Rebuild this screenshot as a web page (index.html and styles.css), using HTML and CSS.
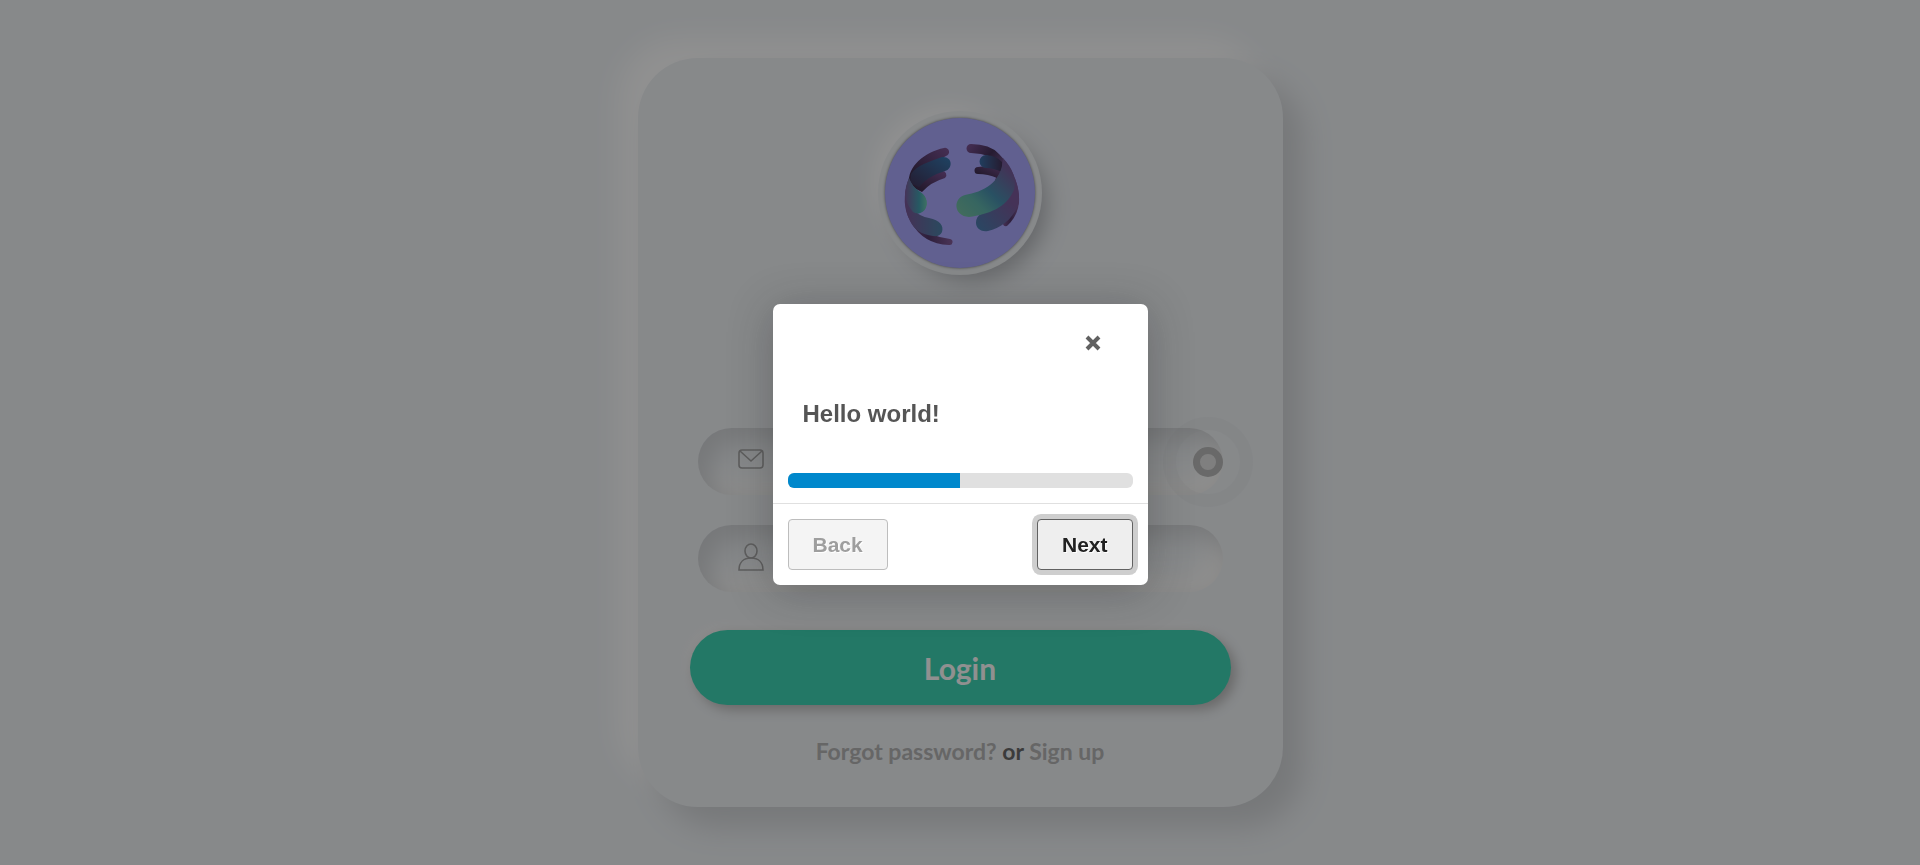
FILE: index.html
```
<!DOCTYPE html>
<html lang="en">
<head>
    <meta charset="UTF-8">
    <meta name="viewport" content="width=device-width, initial-scale=1.0">
    <title>Login</title>
    <link rel="stylesheet" href="styles.css">
</head>
<body>
    <main class="login-card">
        <div class="logo">
            <svg viewBox="0 0 150 150" aria-hidden="true">
                <defs>
                    <linearGradient id="plum" x1="0" y1="0" x2="1" y2="0">
                        <stop offset="0" stop-color="#6b4088"/>
                        <stop offset=".5" stop-color="#3a1c54"/>
                        <stop offset="1" stop-color="#74478c"/>
                    </linearGradient>
                    <linearGradient id="plum-dark" x1="1" y1="0" x2="0" y2="1">
                        <stop offset="0" stop-color="#6c3c88"/>
                        <stop offset=".8" stop-color="#241238"/>
                    </linearGradient>
                    <linearGradient id="night" x1="1" y1="0" x2="0" y2="1">
                        <stop offset="0" stop-color="#1c64a4"/>
                        <stop offset="1" stop-color="#261640"/>
                    </linearGradient>
                    <linearGradient id="night-right" x1="0" y1="0" x2="1" y2="0">
                        <stop offset="0" stop-color="#205a9a"/>
                        <stop offset="1" stop-color="#281640"/>
                    </linearGradient>
                    <linearGradient id="arm-right" x1="0" y1="0" x2="1" y2="1">
                        <stop offset="0" stop-color="#6c3c88"/>
                        <stop offset=".3" stop-color="#2a1440"/>
                        <stop offset=".55" stop-color="#66408a"/>
                        <stop offset="1" stop-color="#74428c"/>
                    </linearGradient>
                    <linearGradient id="aqua-left" x1="0" y1="0" x2="1" y2="0">
                        <stop offset="0" stop-color="#6a4590"/>
                        <stop offset=".65" stop-color="#2a92a5"/>
                        <stop offset="1" stop-color="#5bc0a4"/>
                    </linearGradient>
                    <linearGradient id="aqua-right" x1="0" y1="1" x2="1" y2="0">
                        <stop offset="0" stop-color="#67b995"/>
                        <stop offset=".3" stop-color="#4ba9a0"/>
                        <stop offset=".5" stop-color="#3080a4"/>
                        <stop offset=".85" stop-color="#63458c"/>
                    </linearGradient>
                    <linearGradient id="steel-left" x1="0" y1="0" x2="1" y2="0">
                        <stop offset="0" stop-color="#68408a"/>
                        <stop offset="1" stop-color="#33719c"/>
                    </linearGradient>
                    <linearGradient id="steel-right" x1="0" y1="1" x2="1" y2="0">
                        <stop offset="0" stop-color="#2f6fa5"/>
                        <stop offset=".7" stop-color="#68428c"/>
                    </linearGradient>
                </defs>
                <!-- left hand -->
                <path fill="url(#plum-dark)" d="M24 66C22 48 40 34 59 30A4 4 0 0 1 61 38C54 42 46 44 40 52Z"/>
                <path fill="url(#plum-dark)" d="M27 61Q40 57 57 53A4 4 0 0 1 60 60Q46 64 37 74L25 68Z"/>
                <path fill="url(#night)" d="M26 56C32 47 44 44 57 39C68 38 68 51 60 53Q43 58 34 69L25 65Z"/>
                <path fill="url(#plum)" d="M24 61C18 76 18 92 26 104Q38 126 64 127A3 3 0 0 0 65 121Q46 119 36 108L24 90Z"/>
                <path fill="url(#aqua-left)" d="M24 60Q27 69 35 74C44 79 44 92 35 95Q29 96 28 100C18 88 19 72 24 60Z"/>
                <path fill="url(#steel-left)" d="M20 76Q26 97 44 100C55 102 59 108 57 114Q55 119 48 118Q31 116 25 103Q20 94 20 76Z"/>
                <path fill="url(#aqua-left)" d="M24 60Q27 69 35 74C44 79 44 92 35 95Q31 96 28 94Q22 87 20 78Q20 69 24 60Z"/>
                <!-- right hand -->
                <path fill="url(#plum)" d="M134 84Q133 98 122 108Q117 109 118 103L126 86Z"/>
                <path fill="url(#arm-right)" d="M86 26Q105 26 114 36C128 50 135 68 134 84Q132 93 126 94L110 62L117 46Q107 36 86 35A4 4 0 0 1 86 26Z"/>
                <path fill="url(#plum-dark)" d="M93 49Q103 48 113 46L117 50L112 60Q103 56 93 56A3 3 0 0 1 93 49Z"/>
                <path fill="url(#night-right)" d="M101 37Q112 38 117 44V54Q108 50 101 50A6 6 0 0 1 101 37Z"/>
                <path fill="url(#steel-right)" d="M96 96Q124 88 130 61Q136 77 133 88C126 103 115 110 103 113C89 115 88 100 96 96Z"/>
                <path fill="url(#aqua-right)" d="M80 77C98 74 117 65 118 40Q133 56 129 72C121 90 104 96 84 99C68 98 68 80 80 77Z"/>
            </svg>
        </div>
        <form class="login-form">
            <div class="fields">
                <label class="field">
                    <svg viewBox="0 0 26 28" aria-hidden="true">
                        <rect x="1" y="4" width="24" height="18" rx="3"/>
                        <path d="M2 5L13 15L24 5"/>
                    </svg>
                    <input type="text" aria-label="Username">
                </label>
                <label class="field">
                    <svg viewBox="0 0 26 28" aria-hidden="true">
                        <ellipse cx="13" cy="8" rx="6" ry="7"/>
                        <path d="M1 27C1 19 6 15 13 15S25 19 25 27Z"/>
                    </svg>
                    <input type="password" aria-label="Password">
                </label>
                <span class="hint"><span class="hint-dot"></span></span>
            </div>
            <button class="login-btn" type="submit">Login</button>
        </form>
        <p class="links"><a href="#">Forgot password?</a> or <a href="#">Sign up</a></p>
    </main>

    <div class="overlay">
        <section class="tooltip" role="dialog" aria-label="Tour">
            <header class="tooltip-header">
                <button class="close-btn" type="button" aria-label="Close">
                    <svg viewBox="0 0 16 16" aria-hidden="true"><path d="M2 2L14 14M14 2L2 14"/></svg>
                </button>
            </header>
            <p class="tooltip-text">Hello world!</p>
            <div class="progress">
                <div class="progress-bar"></div>
            </div>
            <footer class="tooltip-buttons">
                <button class="tour-btn" type="button" disabled>Back</button>
                <button class="tour-btn next" type="button">Next</button>
            </footer>
        </section>
    </div>
</body>
</html>
```

FILE: styles.css
```
* {
    margin: 0;
    padding: 0;
    box-sizing: border-box;
}

body {
    min-height: 100vh;
    display: flex;
    align-items: center;
    justify-content: center;
    background: #ecf0f3;
    color: #555;
    font-family: Lato, sans-serif;
}

.login-card {
    width: 100%;
    max-width: 645px;
    padding: 60px 52px 40px;
    border-radius: 60px;
    background: #ecf0f3;
    box-shadow: 20px 20px 30px #cbced1, -20px -20px 30px #fff;
}

.logo {
    width: 150px;
    height: 150px;
    margin: 0 auto;
    border-radius: 50%;
    background: #a09fff;
    box-shadow: 0 0 3px #5f5f5f, 0 0 0 7px #ecf0f3, 12px 12px 22px #a7aaaf, -12px -12px 22px #fff;
}

.logo svg {
    display: block;
}

.fields {
    position: relative;
    display: flex;
    flex-direction: column;
    gap: 30px;
    margin-top: 160px;
    padding: 0 8px;
}

.field {
    display: flex;
    align-items: center;
    gap: 12px;
    height: 67px;
    padding: 0 40px;
    border-radius: 38px;
    box-shadow: inset 12px 12px 24px #cbced1, inset -12px -12px 24px #fbfaf8;
}

.field svg {
    width: 26px;
    height: 28px;
    margin-bottom: 4px;
    fill: none;
    stroke: #999;
    stroke-width: 1.6;
}

.field input {
    flex: 1;
    min-width: 0;
    border: none;
    outline: none;
    background: none;
    color: #555;
    font: 24px Lato, sans-serif;
}

/* tour hint over the end of the first field */
.hint {
    position: absolute;
    top: -11px;
    right: -22px;
    display: grid;
    place-items: center;
    width: 90px;
    height: 90px;
    border: 13px solid rgba(146, 146, 146, 0.06);
    border-radius: 50%;
}

.hint-dot {
    width: 30px;
    height: 30px;
    border: 7px solid #b0b0b0;
    border-radius: 50%;
    background: #ddd;
}

.login-btn {
    display: block;
    width: 100%;
    height: 75px;
    margin-top: 38px;
    border: none;
    border-radius: 45px;
    background: #24cfaa;
    box-shadow: 5px 5px 12px #b1b1b1, -5px -5px 12px #f4f4f4;
    color: #fff;
    font: 700 30px Lato, sans-serif;
    cursor: pointer;
}

.links {
    margin-top: 30px;
    text-align: center;
    font-size: 23px;
    font-weight: 700;
    line-height: 32px;
}

.links a {
    color: #aaa;
    text-decoration: none;
}

.overlay {
    position: fixed;
    inset: 0;
    display: grid;
    place-items: center;
    padding-top: 23px;
    background: rgba(33, 33, 33, 0.5);
}

.tooltip {
    width: 375px;
    border-radius: 7px;
    background: #fff;
    box-shadow: 0 5px 45px rgba(33, 33, 33, 0.3);
    font-family: "Liberation Sans", sans-serif;
}

.tooltip-header {
    display: flex;
    justify-content: flex-end;
    padding: 24px 40px 0;
}

.close-btn {
    width: 30px;
    height: 30px;
    padding: 7px;
    border: none;
    background: none;
    cursor: pointer;
}

.close-btn svg {
    display: block;
    stroke: #616161;
    stroke-width: 4;
}

.tooltip-text {
    padding: 40px 30px 32px;
    font-size: 24px;
    font-weight: 700;
    line-height: 32px;
}

.progress {
    height: 15px;
    margin: 11px 15px 15px;
    overflow: hidden;
    border-radius: 6px;
    background: #e0e0e0;
}

.progress-bar {
    width: 50%;
    height: 100%;
    background: #08c;
}

.tooltip-buttons {
    display: flex;
    justify-content: space-between;
    padding: 15px;
    border-top: 1px solid #e0e0e0;
}

.tour-btn {
    padding: 12px 24px;
    border: 1px solid #bdbdbd;
    border-radius: 4px;
    background: #f4f4f4;
    color: #9e9e9e;
    font: 700 21px/25px "Liberation Sans", sans-serif;
    text-shadow: 1px 1px 0 #fff;
}

.tour-btn.next {
    border-color: #616161;
    background: #eee;
    box-shadow: 0 0 0 5px rgba(158, 158, 158, 0.5);
    color: #212121;
    cursor: pointer;
}
```
